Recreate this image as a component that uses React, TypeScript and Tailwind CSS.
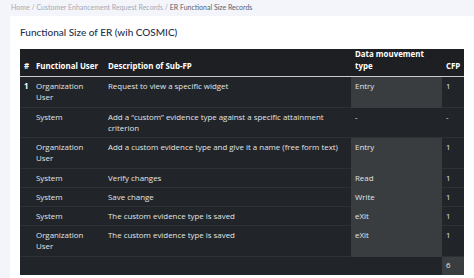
const rows = [
  { n: '1', user: 'Organization User', desc: 'Request to view a specific widget', type: 'Entry', cfp: '1', pb: 'pb-[4px]' },
  { n: '', user: 'System', desc: 'Add a “custom” evidence type against a specific attainment criterion', type: '-', cfp: '-', pb: 'pb-[3px]' },
  { n: '', user: 'Organization User', desc: 'Add a custom evidence type and give it a name (free form text)', type: 'Entry', cfp: '1', pb: 'pb-[4px]' },
  { n: '', user: 'System', desc: 'Verify changes', type: 'Read', cfp: '1', pb: 'pb-[3px]' },
  { n: '', user: 'System', desc: 'Save change', type: 'Write', cfp: '1', pb: 'pb-[3px]' },
  { n: '', user: 'System', desc: 'The custom evidence type is saved', type: 'eXit', cfp: '1', pb: 'pb-[3px]' },
  { n: '', user: 'Organization User', desc: 'The custom evidence type is saved', type: 'eXit', cfp: '1', pb: 'pb-[4px]' },
];

export default function App() {
  return (
    <div className="w-[474px] h-[278px] overflow-hidden bg-[#f3f5fa]" style={{ fontFamily: '"Open Sans", sans-serif' }}>
      <div className="h-[16px] pl-[11px] pt-[1px] text-[7px] leading-[12px] text-[#a3a9b6]" style={{ fontFamily: 'Lato, sans-serif' }}>
        Home / Customer Enhancement Request Records / <span className="text-[#59606e]">ER Functional Size Records</span>
      </div>
      <div className="ml-[10px] bg-white pl-[10px] pt-[8px] pb-[20px]">
        <h1 className="text-[10px] leading-[16px] font-medium text-[#27304a] mb-[9px]" style={{ fontFamily: 'Lato, sans-serif' }}>
          Functional Size of ER (wih COSMIC)
        </h1>
        <table className="w-[444px] table-fixed border-collapse text-[7.9px] leading-[11px] text-[#e2e4e6]">
          <colgroup>
            <col className="w-[12px]" />
            <col className="w-[72px]" />
            <col className="w-[247px]" />
            <col className="w-[91px]" />
            <col className="w-[22px]" />
          </colgroup>
          <thead>
            <tr className="bg-[#1d1f23] font-bold text-white border-b border-[#c9cbce]">
              <th className="align-bottom text-left pl-[4px] pt-[5px] pb-[4px] leading-[11.5px]">#</th>
              <th className="align-bottom text-left pl-[4px] pb-[4px] leading-[11.5px]">Functional User</th>
              <th className="align-bottom text-left pl-[4px] pb-[4px] leading-[11.5px]">Description of Sub-FP</th>
              <th className="align-bottom text-left pl-[4px] pr-[14px] pb-[4px] leading-[11.5px]">Data mouvement type</th>
              <th className="align-bottom text-left pl-[4px] pb-[4px] leading-[11.5px]">CFP</th>
            </tr>
          </thead>
          <tbody className="bg-[#212428]">
            {rows.map((r, i) => (
              <tr key={i}>
                <td className={`align-top pl-[4px] pt-[4px] ${r.pb} font-bold text-white border-b border-[#2d3034]`}>{r.n}</td>
                <td className={`align-top pl-[4px] pr-[8px] pt-[4px] ${r.pb} border-b border-[#2d3034]`}>{r.user}</td>
                <td className={`align-top pl-[4px] pr-[4px] pt-[4px] ${r.pb} border-b border-[#2d3034]`}>{r.desc}</td>
                <td className={`align-top pl-[4px] pt-[4px] ${r.pb} ${r.type === '-' ? 'border-b border-[#2d3034]' : 'bg-[#3a3d40]'}`}>{r.type}</td>
                <td className={`align-top pl-[4px] pt-[4px] ${r.pb} border-b border-[#2d3034]`}>{r.cfp}</td>
              </tr>
            ))}
            <tr>
              <td colSpan={4} className="pt-[3px] pb-[4px]">&nbsp;</td>
              <td className="pl-[4px] pt-[3px] pb-[4px] bg-[#3a3d40]">6</td>
            </tr>
          </tbody>
        </table>
      </div>
    </div>
  );
}
